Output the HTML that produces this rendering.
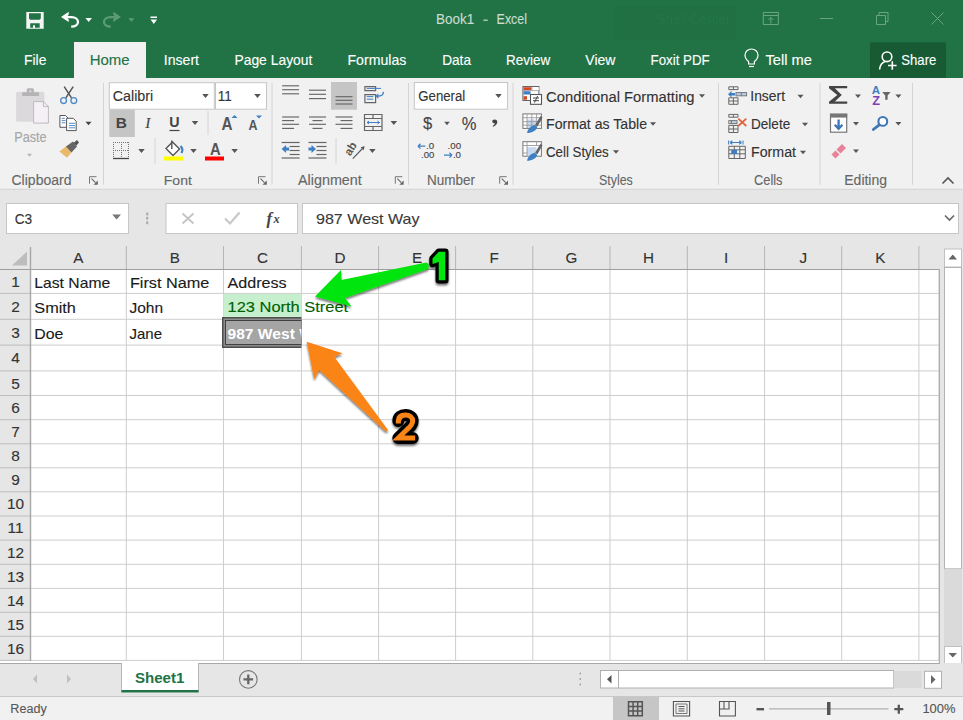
<!DOCTYPE html>
<html><head><meta charset="utf-8"><style>
html,body{margin:0;padding:0;width:963px;height:720px;overflow:hidden;background:#fff;}
svg{display:block;position:absolute;left:0;top:0;}
</style></head><body>
<svg width="963" height="720" viewBox="0 0 963 720" shape-rendering="auto">
<rect x="0" y="0" width="963" height="78" fill="#217346"/>
<rect x="0" y="78" width="963" height="112" fill="#f1f1f1"/>
<line x1="0" y1="189.5" x2="963" y2="189.5" stroke="#d8d8d8" stroke-width="1.6"/>
<rect x="0" y="190" width="963" height="57" fill="#e6e6e6"/>
<path d="M26.3,12 H43.7 V28.8 H26.3 Z M29,13.2 H40.8 V18.6 L39.6,19.8 H30.2 L29,18.6 Z M30.2,23.2 H39.7 V27.8 H35 V25.3 H33 V27.8 H30.2 Z" fill="#f4f4f4" stroke="none" stroke-width="1" fill-rule="evenodd"/>
<path d="M65,17.2 H71.5 C75.5,17.2 78,19.5 78,22 C78,24.5 75.5,26.6 71.2,26.6" fill="none" stroke="#fff" stroke-width="2.3"/>
<path d="M61,16.9 L68.7,11.8 L68.7,14.8 L66.5,16.9 L68.7,19.2 L68.7,22 Z" fill="#fff" stroke="none" stroke-width="1"/>
<path d="M85.45,18.1 L91.95,18.1 L88.7,21.9 Z" fill="#fff" stroke="none" stroke-width="1"/>
<path d="M117,17.2 H110.5 C106.5,17.2 104,19.5 104,22 C104,24.5 106.5,26.6 110.8,26.6" fill="none" stroke="#5c9c74" stroke-width="2.3"/>
<path d="M121,16.9 L113.3,11.8 L113.3,14.8 L115.5,16.9 L113.3,19.2 L113.3,22 Z" fill="#5c9c74" stroke="none" stroke-width="1"/>
<path d="M128.4,18.25 L134.4,18.25 L131.4,21.75 Z" fill="#5c9c74" stroke="none" stroke-width="1"/>
<rect x="150.5" y="16.5" width="6.5" height="1.5" fill="#fff"/>
<path d="M150.55,19.45 L157.05,19.45 L153.8,23.95 Z" fill="#fff" stroke="none" stroke-width="1"/>
<text x="436.0" y="24.2" font-size="15.26" fill="#c9ddd0" font-weight="normal" font-family="Liberation Sans" text-anchor="start" textLength="38.2" lengthAdjust="spacingAndGlyphs" stroke="#c9ddd0" stroke-width="0.12">Book1</text>
<rect x="483.4" y="19.6" width="4.3" height="1.2" fill="#c9ddd0"/>
<text x="496.6" y="24.2" font-size="15.26" fill="#c9ddd0" font-weight="normal" font-family="Liberation Sans" text-anchor="start" textLength="30.4" lengthAdjust="spacingAndGlyphs" stroke="#c9ddd0" stroke-width="0.12">Excel</text>
<rect x="614.4" y="6.2" width="122" height="34.3" fill="#000" fill-opacity="0.02"/>
<text x="656.6" y="24" font-size="15" font-family="Liberation Sans" fill="#fff" fill-opacity="0.04" textLength="73.7" lengthAdjust="spacingAndGlyphs">Shell Center</text>
<path d="M763.3,12.5 H778.3 V24.5 H763.3 Z M763.3,15.5 H778.3" fill="none" stroke="#6aa582" stroke-width="1"/>
<path d="M770.8,23.5 V17.5 M768.3,20 L770.8,17.5 L773.3,20" fill="none" stroke="#6aa582" stroke-width="1"/>
<line x1="820" y1="18.5" x2="833" y2="18.5" stroke="#6aa582" stroke-width="1"/>
<path d="M876.5,15.5 H885.5 V24.5 H876.5 Z M879,15.5 V12.5 H888 V21.5 H885.5" fill="none" stroke="#6aa582" stroke-width="1"/>
<path d="M931.5,12.5 L943.5,24.5 M943.5,12.5 L931.5,24.5" fill="none" stroke="#6aa582" stroke-width="1"/>
<rect x="74" y="42" width="72" height="36" fill="#f1f1f1"/>
<text x="24.0" y="64.8" font-size="15.12" fill="#ffffff" font-weight="normal" font-family="Liberation Sans" text-anchor="start" textLength="22.4" lengthAdjust="spacingAndGlyphs" stroke="#ffffff" stroke-width="0.12">File</text>
<text x="163.8" y="64.8" font-size="15.12" fill="#ffffff" font-weight="normal" font-family="Liberation Sans" text-anchor="start" textLength="35.2" lengthAdjust="spacingAndGlyphs" stroke="#ffffff" stroke-width="0.12">Insert</text>
<text x="234.4" y="64.8" font-size="15.12" fill="#ffffff" font-weight="normal" font-family="Liberation Sans" text-anchor="start" textLength="78.0" lengthAdjust="spacingAndGlyphs" stroke="#ffffff" stroke-width="0.12">Page Layout</text>
<text x="347.5" y="64.8" font-size="15.12" fill="#ffffff" font-weight="normal" font-family="Liberation Sans" text-anchor="start" textLength="58.8" lengthAdjust="spacingAndGlyphs" stroke="#ffffff" stroke-width="0.12">Formulas</text>
<text x="442.2" y="64.8" font-size="15.12" fill="#ffffff" font-weight="normal" font-family="Liberation Sans" text-anchor="start" textLength="28.8" lengthAdjust="spacingAndGlyphs" stroke="#ffffff" stroke-width="0.12">Data</text>
<text x="506.0" y="64.8" font-size="15.12" fill="#ffffff" font-weight="normal" font-family="Liberation Sans" text-anchor="start" textLength="44.2" lengthAdjust="spacingAndGlyphs" stroke="#ffffff" stroke-width="0.12">Review</text>
<text x="585.3" y="64.8" font-size="15.12" fill="#ffffff" font-weight="normal" font-family="Liberation Sans" text-anchor="start" textLength="30.1" lengthAdjust="spacingAndGlyphs" stroke="#ffffff" stroke-width="0.12">View</text>
<text x="650.5" y="64.8" font-size="15.12" fill="#ffffff" font-weight="normal" font-family="Liberation Sans" text-anchor="start" textLength="59.2" lengthAdjust="spacingAndGlyphs" stroke="#ffffff" stroke-width="0.12">Foxit PDF</text>
<text x="765.5" y="64.8" font-size="15.12" fill="#ffffff" font-weight="normal" font-family="Liberation Sans" text-anchor="start" textLength="46.5" lengthAdjust="spacingAndGlyphs" stroke="#ffffff" stroke-width="0.12">Tell me</text>
<text x="89.7" y="64.8" font-size="15.12" fill="#217346" font-weight="normal" font-family="Liberation Sans" text-anchor="start" textLength="39.9" lengthAdjust="spacingAndGlyphs" stroke="#217346" stroke-width="0.12">Home</text>
<path d="M748.6,61.5 C746,59.5 745,57.5 745,55 C745,51.5 748,49 751.5,49 C755,49 758,51.5 758,55 C758,57.5 757,59.5 754.4,61.5 V64 H748.6 Z" fill="none" stroke="#fff" stroke-width="1.2"/>
<line x1="749" y1="66.5" x2="754" y2="66.5" stroke="#fff" stroke-width="1.2"/>
<rect x="870" y="42.3" width="76" height="35.5" fill="#185a33"/>
<circle cx="887" cy="56.8" r="4.8" fill="none" stroke="#fff" stroke-width="1.6"/>
<path d="M879.6,69.5 C880,65.5 882.3,62.5 885.2,61.6" fill="none" stroke="#fff" stroke-width="1.6"/>
<path d="M892.3,61.2 V69.8 M888,65.5 H896.6" fill="none" stroke="#fff" stroke-width="1.6"/>
<text x="901.3" y="64.8" font-size="15.12" fill="#ffffff" font-weight="normal" font-family="Liberation Sans" text-anchor="start" textLength="35.0" lengthAdjust="spacingAndGlyphs" stroke="#ffffff" stroke-width="0.12">Share</text>
<path d="M89.5,183.7 V176.7 H96.5" fill="none" stroke="#777" stroke-width="1"/>
<path d="M91.5,178.7 L95.5,182.7" fill="none" stroke="#666" stroke-width="1.1"/>
<path d="M97.8,184.7 V180.39999999999998 L93.5,184.7 Z" fill="#666" stroke="none" stroke-width="1"/>
<path d="M258.5,183.7 V176.7 H265.5" fill="none" stroke="#777" stroke-width="1"/>
<path d="M260.5,178.7 L264.5,182.7" fill="none" stroke="#666" stroke-width="1.1"/>
<path d="M266.8,184.7 V180.39999999999998 L262.5,184.7 Z" fill="#666" stroke="none" stroke-width="1"/>
<path d="M395.3,183.7 V176.7 H402.3" fill="none" stroke="#777" stroke-width="1"/>
<path d="M397.3,178.7 L401.3,182.7" fill="none" stroke="#666" stroke-width="1.1"/>
<path d="M403.6,184.7 V180.39999999999998 L399.3,184.7 Z" fill="#666" stroke="none" stroke-width="1"/>
<path d="M499.7,183.7 V176.7 H506.7" fill="none" stroke="#777" stroke-width="1"/>
<path d="M501.7,178.7 L505.7,182.7" fill="none" stroke="#666" stroke-width="1.1"/>
<path d="M508.0,184.7 V180.39999999999998 L503.7,184.7 Z" fill="#666" stroke="none" stroke-width="1"/>
<line x1="103.5" y1="83" x2="103.5" y2="184.7" stroke="#d4d4d4" stroke-width="1"/>
<line x1="272" y1="83" x2="272" y2="184.7" stroke="#d4d4d4" stroke-width="1"/>
<line x1="408.5" y1="83" x2="408.5" y2="184.7" stroke="#d4d4d4" stroke-width="1"/>
<line x1="513" y1="83" x2="513" y2="184.7" stroke="#d4d4d4" stroke-width="1"/>
<line x1="718.5" y1="83" x2="718.5" y2="184.7" stroke="#d4d4d4" stroke-width="1"/>
<line x1="820" y1="83" x2="820" y2="184.7" stroke="#d4d4d4" stroke-width="1"/>
<line x1="912.5" y1="83" x2="912.5" y2="184.7" stroke="#d4d4d4" stroke-width="1"/>
<rect x="16.1" y="91.7" width="28.3" height="30" rx="1.5" fill="#dcd9dc"/>
<rect x="22" y="92.2" width="17.1" height="3.9" rx="1" fill="#b5b3b5"/>
<rect x="26.7" y="88.3" width="7.2" height="4.5" rx="1.5" fill="#b5b3b5"/>
<circle cx="30.3" cy="91.3" r="1" fill="#e8e6e8"/>
<path d="M33.6,101.6 H43.4 L48.4,106.6 V123.1 H33.6 Z" fill="#f4f0f6" stroke="#bdb9bd" stroke-width="1"/>
<path d="M43.4,101.6 V106.6 H48.4" fill="none" stroke="#bdb9bd" stroke-width="1"/>
<text x="14.2" y="141.7" font-size="14.53" fill="#a5a5a5" font-weight="normal" font-family="Liberation Sans" text-anchor="start" textLength="32.5" lengthAdjust="spacingAndGlyphs" stroke="#a5a5a5" stroke-width="0.12">Paste</text>
<path d="M27.0,153.7 L32.0,153.7 L29.5,156.7 Z" fill="#b5b5b5" stroke="none" stroke-width="1"/>
<path d="M64.2,86.7 L71.5,97.8 M73.2,86.7 L65.9,97.8" fill="none" stroke="#555" stroke-width="1.5"/>
<circle cx="63.6" cy="100.6" r="2.9" fill="none" stroke="#4b86c6" stroke-width="1.3"/>
<circle cx="73.8" cy="100.6" r="2.9" fill="none" stroke="#4b86c6" stroke-width="1.3"/>
<path d="M59.9,115.5 H65.5 L67.8,117.8 V127.3 H59.9 Z" fill="#fff" stroke="#555" stroke-width="1"/>
<path d="M66.6,118.3 H73.2 L76.2,121.3 V130.6 H66.6 Z" fill="#fff" stroke="#555" stroke-width="1"/>
<path d="M61.7,118.3 H64.8 M61.7,120.6 H65.5 M61.7,122.8 H65.5 M68.9,123.3 H75 M68.9,125.6 H75 M68.9,127.8 H75" fill="none" stroke="#3f7fc3" stroke-width="0.9"/>
<path d="M85.5,121.75 L91.5,121.75 L88.5,125.25 Z" fill="#444" stroke="none" stroke-width="1"/>
<path d="M59.4,151.5 L66.5,146 L71.5,152.5 L67,157.8 Z" fill="#e8b96a" stroke="none" stroke-width="1"/>
<path d="M66,146.5 L73,141.5 L77,146.5 L71.5,152.5 Z" fill="#666" stroke="none" stroke-width="1"/>
<path d="M73.5,143 L77,140 L79,142.5 L76.5,145.5 Z" fill="#555" stroke="none" stroke-width="1"/>
<text x="11.5" y="184.6" font-size="13.81" fill="#666666" font-weight="normal" font-family="Liberation Sans" text-anchor="start" textLength="60.0" lengthAdjust="spacingAndGlyphs" stroke="#666666" stroke-width="0.12">Clipboard</text>
<rect x="109.3" y="82.7" width="105" height="26.5" fill="#ffffff" stroke="#c6c6c6" stroke-width="1"/>
<rect x="215.5" y="82.7" width="51" height="26.5" fill="#ffffff" stroke="#c6c6c6" stroke-width="1"/>
<text x="112.7" y="100.8" font-size="14.68" fill="#333333" font-weight="normal" font-family="Liberation Sans" text-anchor="start" textLength="40.6" lengthAdjust="spacingAndGlyphs" stroke="#333333" stroke-width="0.12">Calibri</text>
<path d="M202.25,94.1 L208.75,94.1 L205.5,97.9 Z" fill="#555" stroke="none" stroke-width="1"/>
<text x="217.8" y="100.8" font-size="14.68" fill="#333333" font-weight="normal" font-family="Liberation Sans" text-anchor="start" textLength="14.0" lengthAdjust="spacingAndGlyphs" stroke="#333333" stroke-width="0.12">11</text>
<path d="M254.25,94.1 L260.75,94.1 L257.5,97.9 Z" fill="#555" stroke="none" stroke-width="1"/>
<rect x="109.3" y="109.5" width="25.5" height="27.5" fill="#c5c5c5"/>
<text x="121.2" y="128.4" font-size="15.41" fill="#444" font-weight="bold" font-family="Liberation Sans" text-anchor="middle">B</text>
<text x="147.7" y="128.4" font-size="15.41" fill="#444" font-weight="normal" font-family="Liberation Serif" text-anchor="middle" stroke="#444" stroke-width="0.12" font-style="italic">I</text>
<text x="174.4" y="127.4" font-size="14.24" fill="#444" font-weight="bold" font-family="Liberation Sans" text-anchor="middle">U</text>
<line x1="169.5" y1="130.5" x2="179.5" y2="130.5" stroke="#444" stroke-width="1.2"/>
<path d="M191.75,121.1 L198.25,121.1 L195,124.9 Z" fill="#555" stroke="none" stroke-width="1"/>
<line x1="208" y1="111" x2="208" y2="135" stroke="#d4d4d4" stroke-width="1"/>
<text x="221.5" y="130.3" font-size="17.44" fill="#555" font-weight="bold" font-family="Liberation Sans" text-anchor="start" textLength="11.0" lengthAdjust="spacingAndGlyphs">A</text>
<path d="M231.5,118 L234.5,115 L237.5,118 Z" fill="#3f7fc3" stroke="none" stroke-width="1"/>
<text x="248.6" y="130.3" font-size="13.81" fill="#555" font-weight="bold" font-family="Liberation Sans" text-anchor="start" textLength="9.0" lengthAdjust="spacingAndGlyphs">A</text>
<path d="M256,115.5 L262,115.5 L259,118.5 Z" fill="#3f7fc3" stroke="none" stroke-width="1"/>
<rect x="113" y="142" width="1" height="1" fill="#777"/>
<rect x="113" y="150" width="1" height="1" fill="#777"/>
<rect x="113" y="142" width="1" height="1" fill="#777"/>
<rect x="121" y="142" width="1" height="1" fill="#777"/>
<rect x="128" y="142" width="1" height="1" fill="#777"/>
<rect x="115" y="142" width="1" height="1" fill="#777"/>
<rect x="115" y="150" width="1" height="1" fill="#777"/>
<rect x="113" y="144" width="1" height="1" fill="#777"/>
<rect x="121" y="144" width="1" height="1" fill="#777"/>
<rect x="128" y="144" width="1" height="1" fill="#777"/>
<rect x="117" y="142" width="1" height="1" fill="#777"/>
<rect x="117" y="150" width="1" height="1" fill="#777"/>
<rect x="113" y="146" width="1" height="1" fill="#777"/>
<rect x="121" y="146" width="1" height="1" fill="#777"/>
<rect x="128" y="146" width="1" height="1" fill="#777"/>
<rect x="119" y="142" width="1" height="1" fill="#777"/>
<rect x="119" y="150" width="1" height="1" fill="#777"/>
<rect x="113" y="148" width="1" height="1" fill="#777"/>
<rect x="121" y="148" width="1" height="1" fill="#777"/>
<rect x="128" y="148" width="1" height="1" fill="#777"/>
<rect x="121" y="142" width="1" height="1" fill="#777"/>
<rect x="121" y="150" width="1" height="1" fill="#777"/>
<rect x="113" y="150" width="1" height="1" fill="#777"/>
<rect x="121" y="150" width="1" height="1" fill="#777"/>
<rect x="128" y="150" width="1" height="1" fill="#777"/>
<rect x="123" y="142" width="1" height="1" fill="#777"/>
<rect x="123" y="150" width="1" height="1" fill="#777"/>
<rect x="113" y="152" width="1" height="1" fill="#777"/>
<rect x="121" y="152" width="1" height="1" fill="#777"/>
<rect x="128" y="152" width="1" height="1" fill="#777"/>
<rect x="125" y="142" width="1" height="1" fill="#777"/>
<rect x="125" y="150" width="1" height="1" fill="#777"/>
<rect x="113" y="154" width="1" height="1" fill="#777"/>
<rect x="121" y="154" width="1" height="1" fill="#777"/>
<rect x="128" y="154" width="1" height="1" fill="#777"/>
<rect x="127" y="142" width="1" height="1" fill="#777"/>
<rect x="127" y="150" width="1" height="1" fill="#777"/>
<rect x="113" y="156" width="1" height="1" fill="#777"/>
<rect x="121" y="156" width="1" height="1" fill="#777"/>
<rect x="128" y="156" width="1" height="1" fill="#777"/>
<line x1="113" y1="158.5" x2="129" y2="158.5" stroke="#444" stroke-width="1.3"/>
<path d="M138.25,149.1 L144.75,149.1 L141.5,152.9 Z" fill="#555" stroke="none" stroke-width="1"/>
<line x1="155" y1="138" x2="155" y2="164" stroke="#d4d4d4" stroke-width="1"/>
<path d="M166,148.5 L172.5,142 L179.5,149 L173,155.5 Z" fill="#fff" stroke="#555" stroke-width="1.4"/>
<path d="M171.8,140.5 V149" fill="none" stroke="#555" stroke-width="1.4"/>
<path d="M180.5,146 C182.5,148 183,150.5 181.5,153" fill="none" stroke="#3f7fc3" stroke-width="2.2"/>
<rect x="164" y="156.5" width="19" height="4" fill="#ffff00"/>
<path d="M190.25,149.1 L196.75,149.1 L193.5,152.9 Z" fill="#555" stroke="none" stroke-width="1"/>
<text x="209.9" y="155.1" font-size="16.13" fill="#555" font-weight="bold" font-family="Liberation Sans" text-anchor="start" textLength="10.7" lengthAdjust="spacingAndGlyphs">A</text>
<rect x="205" y="156.5" width="19" height="4" fill="#ff0000"/>
<path d="M231.35,149.1 L237.85,149.1 L234.6,152.9 Z" fill="#555" stroke="none" stroke-width="1"/>
<text x="163.8" y="184.5" font-size="13.52" fill="#666666" font-weight="normal" font-family="Liberation Sans" text-anchor="start" textLength="28.0" lengthAdjust="spacingAndGlyphs" stroke="#666666" stroke-width="0.12">Font</text>
<rect x="331" y="82" width="26" height="27.7" fill="#c5c5c5"/>
<line x1="282.1" y1="85.8" x2="299.1" y2="85.8" stroke="#666666" stroke-width="1.15"/>
<line x1="282.1" y1="89.7" x2="299.1" y2="89.7" stroke="#666666" stroke-width="1.15"/>
<line x1="282.1" y1="93.8" x2="299.1" y2="93.8" stroke="#666666" stroke-width="1.15"/>
<line x1="309.0" y1="90.2" x2="326.0" y2="90.2" stroke="#666666" stroke-width="1.15"/>
<line x1="309.0" y1="94.3" x2="326.0" y2="94.3" stroke="#666666" stroke-width="1.15"/>
<line x1="309.0" y1="98.6" x2="326.0" y2="98.6" stroke="#666666" stroke-width="1.15"/>
<line x1="335.5" y1="96.7" x2="352.5" y2="96.7" stroke="#666666" stroke-width="1.15"/>
<line x1="335.5" y1="100.3" x2="352.5" y2="100.3" stroke="#666666" stroke-width="1.15"/>
<line x1="335.5" y1="104" x2="352.5" y2="104" stroke="#666666" stroke-width="1.15"/>
<path d="M364.9,86.7 H375.6 V90.6 H364.9 Z M364.9,94.7 H375.6 V102.6 H364.9 Z" fill="none" stroke="#666666" stroke-width="1.2"/>
<path d="M366.7,88.4 H381.1 M366.7,96.6 H373.3 M366.7,99.2 H373.3" fill="none" stroke="#3f7fc3" stroke-width="1"/>
<path d="M383.3,91.8 C383.8,95 381,96.3 377,96.1" fill="none" stroke="#3f7fc3" stroke-width="1.4"/>
<path d="M375.2,96.1 L378.4,93.4 L378.4,98.8 Z" fill="#3f7fc3" stroke="none" stroke-width="1"/>
<line x1="282.1" y1="117" x2="299.1" y2="117" stroke="#666666" stroke-width="1.15"/>
<line x1="282.1" y1="120.6" x2="294.1" y2="120.6" stroke="#666666" stroke-width="1.15"/>
<line x1="282.1" y1="124.3" x2="299.1" y2="124.3" stroke="#666666" stroke-width="1.15"/>
<line x1="282.1" y1="128.4" x2="294.1" y2="128.4" stroke="#666666" stroke-width="1.15"/>
<line x1="309.0" y1="117" x2="326.0" y2="117" stroke="#666666" stroke-width="1.15"/>
<line x1="312.5" y1="120.6" x2="322.5" y2="120.6" stroke="#666666" stroke-width="1.15"/>
<line x1="309.0" y1="124.3" x2="326.0" y2="124.3" stroke="#666666" stroke-width="1.15"/>
<line x1="312.5" y1="128.4" x2="322.5" y2="128.4" stroke="#666666" stroke-width="1.15"/>
<line x1="335.5" y1="117" x2="352.5" y2="117" stroke="#666666" stroke-width="1.15"/>
<line x1="340.5" y1="120.6" x2="352.5" y2="120.6" stroke="#666666" stroke-width="1.15"/>
<line x1="335.5" y1="124.3" x2="352.5" y2="124.3" stroke="#666666" stroke-width="1.15"/>
<line x1="340.5" y1="128.4" x2="352.5" y2="128.4" stroke="#666666" stroke-width="1.15"/>
<path d="M364.5,114.5 H382 V130.5 H364.5 Z M364.5,118.5 H382 M364.5,126.5 H382 M373,114.5 V118.5 M373,126.5 V130.5" fill="none" stroke="#666666" stroke-width="1.2"/>
<path d="M367,122.5 H379.5 M367,122.5 L369,121 M367,122.5 L369,124 M379.5,122.5 L377.5,121 M379.5,122.5 L377.5,124" fill="none" stroke="#3f7fc3" stroke-width="1"/>
<path d="M390.55,121.1 L397.05,121.1 L393.8,124.9 Z" fill="#555" stroke="none" stroke-width="1"/>
<line x1="281.6" y1="142.5" x2="299.6" y2="142.5" stroke="#666666" stroke-width="1.2"/>
<line x1="289.6" y1="146.5" x2="299.6" y2="146.5" stroke="#666666" stroke-width="1.2"/>
<line x1="289.6" y1="150.5" x2="299.6" y2="150.5" stroke="#666666" stroke-width="1.2"/>
<line x1="289.6" y1="154.5" x2="299.6" y2="154.5" stroke="#666666" stroke-width="1.2"/>
<line x1="281.6" y1="158" x2="299.6" y2="158" stroke="#666666" stroke-width="1.2"/>
<path d="M281.6,149 L286.1,145 V147.5 H289.1 V150.5 H286.1 V153 Z" fill="#3f7fc3" stroke="none" stroke-width="1"/>
<line x1="308.5" y1="142.5" x2="326.5" y2="142.5" stroke="#666666" stroke-width="1.2"/>
<line x1="316.5" y1="146.5" x2="326.5" y2="146.5" stroke="#666666" stroke-width="1.2"/>
<line x1="316.5" y1="150.5" x2="326.5" y2="150.5" stroke="#666666" stroke-width="1.2"/>
<line x1="316.5" y1="154.5" x2="326.5" y2="154.5" stroke="#666666" stroke-width="1.2"/>
<line x1="308.5" y1="158" x2="326.5" y2="158" stroke="#666666" stroke-width="1.2"/>
<path d="M316.0,149 L311.5,145 V147.5 H308.5 V150.5 H311.5 V153 Z" fill="#3f7fc3" stroke="none" stroke-width="1"/>
<line x1="336" y1="138" x2="336" y2="164" stroke="#d4d4d4" stroke-width="1"/>
<text x="0" y="0" font-size="11.5" fill="#5a5a5a" font-weight="bold" font-family="Liberation Sans" transform="translate(350.2 156.5) rotate(-58)">ab</text>
<path d="M352.8,158.7 L363.9,147" fill="none" stroke="#555" stroke-width="1.1"/>
<path d="M364.6,146.3 L360.6,147.3 L363.6,150.2 Z" fill="#555" stroke="none" stroke-width="1"/>
<path d="M369.15,149.1 L375.65,149.1 L372.4,152.9 Z" fill="#555" stroke="none" stroke-width="1"/>
<text x="298.0" y="184.6" font-size="13.81" fill="#666666" font-weight="normal" font-family="Liberation Sans" text-anchor="start" textLength="63.8" lengthAdjust="spacingAndGlyphs" stroke="#666666" stroke-width="0.12">Alignment</text>
<rect x="414.3" y="82.5" width="93.3" height="26.7" fill="#ffffff" stroke="#c6c6c6" stroke-width="1"/>
<text x="418.3" y="100.7" font-size="14.53" fill="#333333" font-weight="normal" font-family="Liberation Sans" text-anchor="start" textLength="47.0" lengthAdjust="spacingAndGlyphs" stroke="#333333" stroke-width="0.12">General</text>
<path d="M495.25,94.1 L501.75,94.1 L498.5,97.9 Z" fill="#555" stroke="none" stroke-width="1"/>
<text x="427.7" y="128.5" font-size="16.28" fill="#444" font-weight="normal" font-family="Liberation Sans" text-anchor="middle" textLength="9.2" lengthAdjust="spacingAndGlyphs" stroke="#444" stroke-width="0.12">$</text>
<path d="M444.25,121.85 L449.75,121.85 L447,125.15 Z" fill="#555" stroke="none" stroke-width="1"/>
<text x="469.2" y="129.8" font-size="18.17" fill="#444" font-weight="normal" font-family="Liberation Sans" text-anchor="middle" textLength="14.7" lengthAdjust="spacingAndGlyphs" stroke="#444" stroke-width="0.12">%</text>
<path d="M494.5,119.5 C496.5,119.5 497.3,120.8 497.3,122 C497.3,124 495.5,126 493,126.8 L492.7,125.8 C494,125.2 494.8,124.3 494.8,123.3 C493.2,123.3 492.3,122.4 492.3,121.4 C492.3,120.2 493.3,119.5 494.5,119.5 Z" fill="#444" stroke="none" stroke-width="1"/>
<text x="426.1" y="148.8" font-size="8.72" fill="#444" font-weight="normal" font-family="Liberation Sans" text-anchor="start" textLength="8.1" lengthAdjust="spacingAndGlyphs" stroke="#444" stroke-width="0.12">.0</text>
<text x="421.0" y="157.6" font-size="8.72" fill="#444" font-weight="normal" font-family="Liberation Sans" text-anchor="start" textLength="13.2" lengthAdjust="spacingAndGlyphs" stroke="#444" stroke-width="0.12">.00</text>
<path d="M418,146.2 H425.3 M418,146.2 L420.5,143.8 M418,146.2 L420.5,148.6" fill="none" stroke="#3f7fc3" stroke-width="1.2"/>
<text x="447.6" y="148.8" font-size="8.72" fill="#444" font-weight="normal" font-family="Liberation Sans" text-anchor="start" textLength="13.4" lengthAdjust="spacingAndGlyphs" stroke="#444" stroke-width="0.12">.00</text>
<text x="452.9" y="157.6" font-size="8.72" fill="#444" font-weight="normal" font-family="Liberation Sans" text-anchor="start" textLength="8.1" lengthAdjust="spacingAndGlyphs" stroke="#444" stroke-width="0.12">.0</text>
<path d="M444,155.1 H452 M452,155.1 L449.5,152.7 M452,155.1 L449.5,157.5" fill="none" stroke="#3f7fc3" stroke-width="1.2"/>
<text x="427.0" y="184.6" font-size="13.81" fill="#666666" font-weight="normal" font-family="Liberation Sans" text-anchor="start" textLength="48.0" lengthAdjust="spacingAndGlyphs" stroke="#666666" stroke-width="0.12">Number</text>
<rect x="522.9" y="86.5" width="16" height="14" fill="#ffffff" stroke="#666" stroke-width="1"/>
<rect x="523.5" y="87.2" width="8" height="3" fill="#d24726"/>
<rect x="532.2" y="87.2" width="6.5" height="3" fill="#ffffff"/>
<path d="M532,87 V90.5 M523,90.6 H539" fill="none" stroke="#999" stroke-width="0.8"/>
<rect x="523.5" y="91.2" width="7" height="3.3" fill="#3f7fc3"/>
<rect x="523.5" y="96.2" width="3.5" height="3.5" fill="#d24726"/>
<rect x="530.5" y="94.5" width="11" height="9.8" fill="#ffffff" stroke="#555" stroke-width="1.1"/>
<path d="M533,98 H539 M533,100.7 H539 M537.6,96 L534.4,102.7" fill="none" stroke="#444" stroke-width="1"/>
<text x="546.1" y="101.7" font-size="14.53" fill="#333333" font-weight="normal" font-family="Liberation Sans" text-anchor="start" textLength="148.5" lengthAdjust="spacingAndGlyphs" stroke="#333333" stroke-width="0.12">Conditional Formatting</text>
<path d="M699.0,94.25 L705.0,94.25 L702,97.75 Z" fill="#555" stroke="none" stroke-width="1"/>
<rect x="522.9" y="113.9" width="18.5" height="14.5" fill="#ffffff" stroke="#777" stroke-width="1"/>
<rect x="527" y="119.4" width="9" height="8.5" fill="#c5d9f1"/>
<path d="M522.9,117.7 H541.4 M522.9,121.7 H541.4 M522.9,125.2 H541.4 M527,113.9 V128.4 M531.8,113.9 V128.4 M536.6,113.9 V128.4" fill="none" stroke="#999" stroke-width="0.9"/>
<path d="M535,124.9 L540.5,115.9 L542.5,117.4 L537.5,126.4 Z" fill="#666" stroke="none" stroke-width="1"/>
<path d="M527,132.9 C527.5,129.4 530.5,125.9 534.5,124.9 L537.2,126.9 C536.5,130.4 532,132.9 527,132.9 Z" fill="#3f7fc3" stroke="none" stroke-width="1"/>
<text x="546.0" y="129.0" font-size="14.53" fill="#333333" font-weight="normal" font-family="Liberation Sans" text-anchor="start" textLength="101.0" lengthAdjust="spacingAndGlyphs" stroke="#333333" stroke-width="0.12">Format as Table</text>
<path d="M650.0,122.25 L656.0,122.25 L653,125.75 Z" fill="#555" stroke="none" stroke-width="1"/>
<rect x="522.9" y="141.7" width="18.5" height="14.5" fill="#ffffff" stroke="#777" stroke-width="1"/>
<rect x="527" y="147.2" width="9.5" height="9" fill="#c5d9f1"/>
<path d="M522.9,145.5 H541.4 M522.9,153.0 H527 M527,141.7 V156.2 M536.6,141.7 V145.5" fill="none" stroke="#999" stroke-width="0.9"/>
<path d="M535,152.7 L540.5,143.7 L542.5,145.2 L537.5,154.2 Z" fill="#666" stroke="none" stroke-width="1"/>
<path d="M527,160.7 C527.5,157.2 530.5,153.7 534.5,152.7 L537.2,154.7 C536.5,158.2 532,160.7 527,160.7 Z" fill="#3f7fc3" stroke="none" stroke-width="1"/>
<text x="546.0" y="157.0" font-size="14.53" fill="#333333" font-weight="normal" font-family="Liberation Sans" text-anchor="start" textLength="62.7" lengthAdjust="spacingAndGlyphs" stroke="#333333" stroke-width="0.12">Cell Styles</text>
<path d="M613.0,150.25 L619.0,150.25 L616,153.75 Z" fill="#555" stroke="none" stroke-width="1"/>
<text x="599.0" y="184.6" font-size="13.81" fill="#666666" font-weight="normal" font-family="Liberation Sans" text-anchor="start" textLength="33.7" lengthAdjust="spacingAndGlyphs" stroke="#666666" stroke-width="0.12">Styles</text>
<path d="M728.8,86.8 H738 V89.6 H728.8 Z M733.4,86.8 V89.6" fill="none" stroke="#666" stroke-width="1"/>
<path d="M728.8,97.8 H738 V104.3 H728.8 Z M728.8,101 H738 M733.4,97.8 V104.3" fill="none" stroke="#666" stroke-width="1"/>
<rect x="736" y="92.6" width="10.6" height="3.2" fill="#b8d0ea" stroke="#777" stroke-width="1"/>
<line x1="741.3" y1="92.6" x2="741.3" y2="95.8" stroke="#777" stroke-width="1"/>
<path d="M728,94.2 L731.5,90.8 V92.9 H735 V95.5 H731.5 V97.6 Z" fill="#3f7fc3" stroke="none" stroke-width="1"/>
<text x="750.3" y="100.5" font-size="14.24" fill="#333333" font-weight="normal" font-family="Liberation Sans" text-anchor="start" textLength="34.7" lengthAdjust="spacingAndGlyphs" stroke="#333333" stroke-width="0.12">Insert</text>
<path d="M797.5,94.75 L803.5,94.75 L800.5,98.25 Z" fill="#555" stroke="none" stroke-width="1"/>
<path d="M728.8,114.4 H738 V117.2 H728.8 Z M733.4,114.4 V117.2" fill="none" stroke="#666" stroke-width="1"/>
<path d="M728.8,125.4 H738 V132.5 H728.8 Z M728.8,129 H738 M733.4,125.4 V132.5" fill="none" stroke="#666" stroke-width="1"/>
<rect x="728.8" y="120.6" width="2.4" height="3" fill="none" stroke="#777" stroke-width="1"/>
<rect x="731.4" y="120.6" width="5.6" height="3" fill="#b8d0ea" stroke="#777" stroke-width="1"/>
<path d="M738.3,118.6 L746.3,126 M746.3,118.6 L738.3,126" fill="none" stroke="#e0643f" stroke-width="1.8"/>
<text x="751.0" y="128.7" font-size="14.24" fill="#333333" font-weight="normal" font-family="Liberation Sans" text-anchor="start" textLength="39.2" lengthAdjust="spacingAndGlyphs" stroke="#333333" stroke-width="0.12">Delete</text>
<path d="M802.0,122.75 L808.0,122.75 L805,126.25 Z" fill="#555" stroke="none" stroke-width="1"/>
<path d="M728.8,146.3 H745.3 V158.5 H728.8 Z M728.8,149.8 H745.3 M728.8,153.8 H745.3 M734.3,146.3 V158.5 M739.8,146.3 V158.5" fill="none" stroke="#666" stroke-width="1"/>
<rect x="731.2" y="150" width="5.8" height="4" fill="#3f7fc3"/>
<path d="M730,142.5 H741.5 M730,142.5 L732.3,140.8 M730,142.5 L732.3,144.2 M741.5,142.5 L739.2,140.8 M741.5,142.5 L739.2,144.2" fill="none" stroke="#3f7fc3" stroke-width="1.1"/>
<path d="M728.6,140.5 V144.5 M743,140.5 V144.5" fill="none" stroke="#3f7fc3" stroke-width="1"/>
<text x="751.0" y="156.5" font-size="14.24" fill="#333333" font-weight="normal" font-family="Liberation Sans" text-anchor="start" textLength="45.0" lengthAdjust="spacingAndGlyphs" stroke="#333333" stroke-width="0.12">Format</text>
<path d="M800.0,150.75 L806.0,150.75 L803,154.25 Z" fill="#555" stroke="none" stroke-width="1"/>
<text x="754.0" y="184.6" font-size="13.81" fill="#666666" font-weight="normal" font-family="Liberation Sans" text-anchor="start" textLength="28.5" lengthAdjust="spacingAndGlyphs" stroke="#666666" stroke-width="0.12">Cells</text>
<path d="M829,86 H847.2 V88.3 H834.8 L841.8,95 L834.8,101.4 H847.2 V103.7 H829 V101.7 L837.3,95 L829,88.2 Z" fill="#444" stroke="none" stroke-width="1"/>
<path d="M855.0,94.55 L861.0,94.55 L858,98.05 Z" fill="#555" stroke="none" stroke-width="1"/>
<text x="871.7" y="93.7" font-size="11.34" fill="#3f7fc3" font-weight="bold" font-family="Liberation Sans" text-anchor="start" textLength="8.3" lengthAdjust="spacingAndGlyphs">A</text>
<text x="872.2" y="104.8" font-size="12.21" fill="#7e3fb3" font-weight="bold" font-family="Liberation Sans" text-anchor="start" textLength="7.8" lengthAdjust="spacingAndGlyphs">Z</text>
<path d="M882.2,92 H890.6 L887.6,95.6 V99.8 H885.2 V95.6 Z" fill="#666" stroke="none" stroke-width="1"/>
<path d="M895.4,94.55 L901.4,94.55 L898.4,98.05 Z" fill="#555" stroke="none" stroke-width="1"/>
<rect x="830.5" y="114.2" width="16.2" height="18" fill="#ffffff" stroke="#777" stroke-width="1.2"/>
<rect x="830" y="113.7" width="17.2" height="3.9" fill="#777"/>
<path d="M838.6,119.5 V128.5 M834.8,124.8 L838.6,128.8 L842.4,124.8" fill="none" stroke="#3d75b5" stroke-width="2.3"/>
<path d="M853.0,121.95 L859.0,121.95 L856,125.45 Z" fill="#555" stroke="none" stroke-width="1"/>
<circle cx="882.8" cy="121.4" r="4.4" fill="#fff" stroke="#3d75b5" stroke-width="2.1"/>
<path d="M879.3,124.9 L873.3,129.5" fill="none" stroke="#3d75b5" stroke-width="2.8" stroke-linecap="round"/>
<path d="M895.4,121.95 L901.4,121.95 L898.4,125.45 Z" fill="#555" stroke="none" stroke-width="1"/>
<path d="M836.5,149.5 L842,144 L846,148 L840.5,153.5 Z" fill="#e8819a" stroke="none" stroke-width="1"/>
<path d="M831.5,154.5 L835.5,150.5 L839.5,154.5 L835.5,158.5 Z" fill="#e8819a" stroke="none" stroke-width="1"/>
<path d="M853.0,149.55 L859.0,149.55 L856,153.05 Z" fill="#555" stroke="none" stroke-width="1"/>
<text x="844.3" y="184.6" font-size="13.81" fill="#666666" font-weight="normal" font-family="Liberation Sans" text-anchor="start" textLength="42.7" lengthAdjust="spacingAndGlyphs" stroke="#666666" stroke-width="0.12">Editing</text>
<path d="M942.5,183.5 L948,178 L953.5,183.5" fill="none" stroke="#555" stroke-width="1.6"/>
<rect x="6.5" y="203.5" width="122" height="30" fill="#ffffff" stroke="#c6c6c6" stroke-width="1"/>
<text x="14.7" y="224.4" font-size="15.12" fill="#333333" font-weight="normal" font-family="Liberation Sans" text-anchor="start" textLength="17.5" lengthAdjust="spacingAndGlyphs" stroke="#333333" stroke-width="0.12">C3</text>
<path d="M112.19999999999999,214.6 L121.0,214.6 L116.6,219.6 Z" fill="#777" stroke="none" stroke-width="1"/>
<rect x="146.2" y="212.6" width="2" height="2.8" fill="#a8a8a8"/>
<rect x="146.2" y="216.79999999999998" width="2" height="2.8" fill="#a8a8a8"/>
<rect x="146.2" y="221.4" width="2" height="2.8" fill="#a8a8a8"/>
<rect x="166" y="203.5" width="131.5" height="30" fill="#ffffff" stroke="#c6c6c6" stroke-width="1"/>
<path d="M182.5,213.5 L193.5,223.5 M193.5,213.5 L182.5,223.5" fill="none" stroke="#c4c4c4" stroke-width="1.8"/>
<path d="M225,218.5 L230,223.5 L239.5,212.5" fill="none" stroke="#c8c8c8" stroke-width="2.2"/>
<text x="266.5" y="223.5" font-size="16.72" fill="#444" font-weight="bold" font-family="Liberation Serif" text-anchor="start" font-style="italic">f</text>
<text x="273.5" y="222.6" font-size="12.35" fill="#444" font-weight="bold" font-family="Liberation Serif" text-anchor="start" font-style="italic">x</text>
<rect x="302.5" y="203.5" width="656" height="30" fill="#ffffff" stroke="#c6c6c6" stroke-width="1"/>
<text x="316.0" y="224.1" font-size="15.12" fill="#3a3a3a" font-weight="normal" font-family="Liberation Sans" text-anchor="start" textLength="103.6" lengthAdjust="spacingAndGlyphs" stroke="#3a3a3a" stroke-width="0.12">987 West Way</text>
<path d="M945,215.5 L949.5,220 L954,215.5" fill="none" stroke="#666" stroke-width="1.6"/>
<rect x="0" y="247" width="939" height="22" fill="#e6e6e6"/>
<rect x="0" y="269" width="30.5" height="392" fill="#e6e6e6"/>
<rect x="30.5" y="269" width="908.5" height="391.5" fill="#ffffff"/>
<rect x="939" y="247" width="24" height="416" fill="#e6e6e6"/>
<line x1="126.3" y1="269" x2="126.3" y2="660.5" stroke="#cdcdcd" stroke-width="1"/>
<line x1="223.5" y1="269" x2="223.5" y2="660.5" stroke="#cdcdcd" stroke-width="1"/>
<line x1="301.4" y1="269" x2="301.4" y2="660.5" stroke="#cdcdcd" stroke-width="1"/>
<line x1="378.6" y1="269" x2="378.6" y2="660.5" stroke="#cdcdcd" stroke-width="1"/>
<line x1="455.6" y1="269" x2="455.6" y2="660.5" stroke="#cdcdcd" stroke-width="1"/>
<line x1="532.8" y1="269" x2="532.8" y2="660.5" stroke="#cdcdcd" stroke-width="1"/>
<line x1="610" y1="269" x2="610" y2="660.5" stroke="#cdcdcd" stroke-width="1"/>
<line x1="687.3" y1="269" x2="687.3" y2="660.5" stroke="#cdcdcd" stroke-width="1"/>
<line x1="764.6" y1="269" x2="764.6" y2="660.5" stroke="#cdcdcd" stroke-width="1"/>
<line x1="841.7" y1="269" x2="841.7" y2="660.5" stroke="#cdcdcd" stroke-width="1"/>
<line x1="918.9" y1="269" x2="918.9" y2="660.5" stroke="#cdcdcd" stroke-width="1"/>
<line x1="30.5" y1="293.4" x2="939" y2="293.4" stroke="#cdcdcd" stroke-width="1"/>
<line x1="30.5" y1="319.3" x2="939" y2="319.3" stroke="#cdcdcd" stroke-width="1"/>
<line x1="30.5" y1="345.1" x2="939" y2="345.1" stroke="#cdcdcd" stroke-width="1"/>
<line x1="30.5" y1="370.9" x2="939" y2="370.9" stroke="#cdcdcd" stroke-width="1"/>
<line x1="30.5" y1="395.5" x2="939" y2="395.5" stroke="#cdcdcd" stroke-width="1"/>
<line x1="30.5" y1="419.7" x2="939" y2="419.7" stroke="#cdcdcd" stroke-width="1"/>
<line x1="30.5" y1="443.8" x2="939" y2="443.8" stroke="#cdcdcd" stroke-width="1"/>
<line x1="30.5" y1="467.8" x2="939" y2="467.8" stroke="#cdcdcd" stroke-width="1"/>
<line x1="30.5" y1="491.8" x2="939" y2="491.8" stroke="#cdcdcd" stroke-width="1"/>
<line x1="30.5" y1="516" x2="939" y2="516" stroke="#cdcdcd" stroke-width="1"/>
<line x1="30.5" y1="540.1" x2="939" y2="540.1" stroke="#cdcdcd" stroke-width="1"/>
<line x1="30.5" y1="564.3" x2="939" y2="564.3" stroke="#cdcdcd" stroke-width="1"/>
<line x1="30.5" y1="588.4" x2="939" y2="588.4" stroke="#cdcdcd" stroke-width="1"/>
<line x1="30.5" y1="612.3" x2="939" y2="612.3" stroke="#cdcdcd" stroke-width="1"/>
<line x1="30.5" y1="636.3" x2="939" y2="636.3" stroke="#cdcdcd" stroke-width="1"/>
<line x1="30.5" y1="660.4" x2="939" y2="660.4" stroke="#cdcdcd" stroke-width="1"/>
<line x1="126.3" y1="246" x2="126.3" y2="269" stroke="#b5b5b5" stroke-width="1"/>
<line x1="223.5" y1="246" x2="223.5" y2="269" stroke="#b5b5b5" stroke-width="1"/>
<line x1="301.4" y1="246" x2="301.4" y2="269" stroke="#b5b5b5" stroke-width="1"/>
<line x1="378.6" y1="246" x2="378.6" y2="269" stroke="#b5b5b5" stroke-width="1"/>
<line x1="455.6" y1="246" x2="455.6" y2="269" stroke="#b5b5b5" stroke-width="1"/>
<line x1="532.8" y1="246" x2="532.8" y2="269" stroke="#b5b5b5" stroke-width="1"/>
<line x1="610" y1="246" x2="610" y2="269" stroke="#b5b5b5" stroke-width="1"/>
<line x1="687.3" y1="246" x2="687.3" y2="269" stroke="#b5b5b5" stroke-width="1"/>
<line x1="764.6" y1="246" x2="764.6" y2="269" stroke="#b5b5b5" stroke-width="1"/>
<line x1="841.7" y1="246" x2="841.7" y2="269" stroke="#b5b5b5" stroke-width="1"/>
<line x1="918.9" y1="246" x2="918.9" y2="269" stroke="#b5b5b5" stroke-width="1"/>
<line x1="0" y1="293.4" x2="30.5" y2="293.4" stroke="#bdbdbd" stroke-width="1"/>
<line x1="0" y1="319.3" x2="30.5" y2="319.3" stroke="#bdbdbd" stroke-width="1"/>
<line x1="0" y1="345.1" x2="30.5" y2="345.1" stroke="#bdbdbd" stroke-width="1"/>
<line x1="0" y1="370.9" x2="30.5" y2="370.9" stroke="#bdbdbd" stroke-width="1"/>
<line x1="0" y1="395.5" x2="30.5" y2="395.5" stroke="#bdbdbd" stroke-width="1"/>
<line x1="0" y1="419.7" x2="30.5" y2="419.7" stroke="#bdbdbd" stroke-width="1"/>
<line x1="0" y1="443.8" x2="30.5" y2="443.8" stroke="#bdbdbd" stroke-width="1"/>
<line x1="0" y1="467.8" x2="30.5" y2="467.8" stroke="#bdbdbd" stroke-width="1"/>
<line x1="0" y1="491.8" x2="30.5" y2="491.8" stroke="#bdbdbd" stroke-width="1"/>
<line x1="0" y1="516" x2="30.5" y2="516" stroke="#bdbdbd" stroke-width="1"/>
<line x1="0" y1="540.1" x2="30.5" y2="540.1" stroke="#bdbdbd" stroke-width="1"/>
<line x1="0" y1="564.3" x2="30.5" y2="564.3" stroke="#bdbdbd" stroke-width="1"/>
<line x1="0" y1="588.4" x2="30.5" y2="588.4" stroke="#bdbdbd" stroke-width="1"/>
<line x1="0" y1="612.3" x2="30.5" y2="612.3" stroke="#bdbdbd" stroke-width="1"/>
<line x1="0" y1="636.3" x2="30.5" y2="636.3" stroke="#bdbdbd" stroke-width="1"/>
<line x1="0" y1="660.4" x2="30.5" y2="660.4" stroke="#bdbdbd" stroke-width="1"/>
<line x1="0" y1="269.5" x2="939.5" y2="269.5" stroke="#9e9e9e" stroke-width="1.1"/>
<line x1="30.5" y1="247" x2="30.5" y2="661" stroke="#a6a6a6" stroke-width="1.4"/>
<line x1="939" y1="269" x2="939" y2="661" stroke="#c6c6c6" stroke-width="1"/>
<path d="M12,265.5 L27,265.5 L27,251.5 Z" fill="#bdbdbd" stroke="none" stroke-width="1"/>
<text x="78.4" y="263.3" font-size="15.26" fill="#333" font-weight="normal" font-family="Liberation Sans" text-anchor="middle" stroke="#333" stroke-width="0.12">A</text>
<text x="174.9" y="263.3" font-size="15.26" fill="#333" font-weight="normal" font-family="Liberation Sans" text-anchor="middle" stroke="#333" stroke-width="0.12">B</text>
<text x="262.4" y="263.3" font-size="15.26" fill="#333" font-weight="normal" font-family="Liberation Sans" text-anchor="middle" stroke="#333" stroke-width="0.12">C</text>
<text x="340.0" y="263.3" font-size="15.26" fill="#333" font-weight="normal" font-family="Liberation Sans" text-anchor="middle" stroke="#333" stroke-width="0.12">D</text>
<text x="417.1" y="263.3" font-size="15.26" fill="#333" font-weight="normal" font-family="Liberation Sans" text-anchor="middle" stroke="#333" stroke-width="0.12">E</text>
<text x="494.2" y="263.3" font-size="15.26" fill="#333" font-weight="normal" font-family="Liberation Sans" text-anchor="middle" stroke="#333" stroke-width="0.12">F</text>
<text x="571.4" y="263.3" font-size="15.26" fill="#333" font-weight="normal" font-family="Liberation Sans" text-anchor="middle" stroke="#333" stroke-width="0.12">G</text>
<text x="648.6" y="263.3" font-size="15.26" fill="#333" font-weight="normal" font-family="Liberation Sans" text-anchor="middle" stroke="#333" stroke-width="0.12">H</text>
<text x="726.0" y="263.3" font-size="15.26" fill="#333" font-weight="normal" font-family="Liberation Sans" text-anchor="middle" stroke="#333" stroke-width="0.12">I</text>
<text x="803.2" y="263.3" font-size="15.26" fill="#333" font-weight="normal" font-family="Liberation Sans" text-anchor="middle" stroke="#333" stroke-width="0.12">J</text>
<text x="880.3" y="263.3" font-size="15.26" fill="#333" font-weight="normal" font-family="Liberation Sans" text-anchor="middle" stroke="#333" stroke-width="0.12">K</text>
<text x="15.5" y="286.5" font-size="15.41" fill="#333" font-weight="normal" font-family="Liberation Sans" text-anchor="middle" stroke="#333" stroke-width="0.12">1</text>
<text x="15.5" y="311.7" font-size="15.41" fill="#333" font-weight="normal" font-family="Liberation Sans" text-anchor="middle" stroke="#333" stroke-width="0.12">2</text>
<text x="15.5" y="337.5" font-size="15.41" fill="#333" font-weight="normal" font-family="Liberation Sans" text-anchor="middle" stroke="#333" stroke-width="0.12">3</text>
<text x="15.5" y="363.3" font-size="15.41" fill="#333" font-weight="normal" font-family="Liberation Sans" text-anchor="middle" stroke="#333" stroke-width="0.12">4</text>
<text x="15.5" y="388.5" font-size="15.41" fill="#333" font-weight="normal" font-family="Liberation Sans" text-anchor="middle" stroke="#333" stroke-width="0.12">5</text>
<text x="15.5" y="412.9" font-size="15.41" fill="#333" font-weight="normal" font-family="Liberation Sans" text-anchor="middle" stroke="#333" stroke-width="0.12">6</text>
<text x="15.5" y="437.1" font-size="15.41" fill="#333" font-weight="normal" font-family="Liberation Sans" text-anchor="middle" stroke="#333" stroke-width="0.12">7</text>
<text x="15.5" y="461.1" font-size="15.41" fill="#333" font-weight="normal" font-family="Liberation Sans" text-anchor="middle" stroke="#333" stroke-width="0.12">8</text>
<text x="15.5" y="485.1" font-size="15.41" fill="#333" font-weight="normal" font-family="Liberation Sans" text-anchor="middle" stroke="#333" stroke-width="0.12">9</text>
<text x="15.5" y="509.2" font-size="15.41" fill="#333" font-weight="normal" font-family="Liberation Sans" text-anchor="middle" stroke="#333" stroke-width="0.12">10</text>
<text x="15.5" y="533.3" font-size="15.41" fill="#333" font-weight="normal" font-family="Liberation Sans" text-anchor="middle" stroke="#333" stroke-width="0.12">11</text>
<text x="15.5" y="557.5" font-size="15.41" fill="#333" font-weight="normal" font-family="Liberation Sans" text-anchor="middle" stroke="#333" stroke-width="0.12">12</text>
<text x="15.5" y="581.6" font-size="15.41" fill="#333" font-weight="normal" font-family="Liberation Sans" text-anchor="middle" stroke="#333" stroke-width="0.12">13</text>
<text x="15.5" y="605.6" font-size="15.41" fill="#333" font-weight="normal" font-family="Liberation Sans" text-anchor="middle" stroke="#333" stroke-width="0.12">14</text>
<text x="15.5" y="629.6" font-size="15.41" fill="#333" font-weight="normal" font-family="Liberation Sans" text-anchor="middle" stroke="#333" stroke-width="0.12">15</text>
<text x="15.5" y="653.6" font-size="15.41" fill="#333" font-weight="normal" font-family="Liberation Sans" text-anchor="middle" stroke="#333" stroke-width="0.12">16</text>
<text x="34.3" y="288.3" font-size="15.12" fill="#1a1a1a" font-weight="normal" font-family="Liberation Sans" text-anchor="start" textLength="75.9" lengthAdjust="spacingAndGlyphs" stroke="#1a1a1a" stroke-width="0.12">Last Name</text>
<text x="129.9" y="288.3" font-size="15.12" fill="#1a1a1a" font-weight="normal" font-family="Liberation Sans" text-anchor="start" textLength="79.5" lengthAdjust="spacingAndGlyphs" stroke="#1a1a1a" stroke-width="0.12">First Name</text>
<text x="227.5" y="287.6" font-size="15.26" fill="#1a1a1a" font-weight="normal" font-family="Liberation Sans" text-anchor="start" textLength="59.2" lengthAdjust="spacingAndGlyphs" stroke="#1a1a1a" stroke-width="0.12">Address</text>
<text x="34.3" y="312.6" font-size="15.26" fill="#1a1a1a" font-weight="normal" font-family="Liberation Sans" text-anchor="start" textLength="41.6" lengthAdjust="spacingAndGlyphs" stroke="#1a1a1a" stroke-width="0.12">Smith</text>
<text x="129.5" y="312.6" font-size="15.26" fill="#1a1a1a" font-weight="normal" font-family="Liberation Sans" text-anchor="start" textLength="33.6" lengthAdjust="spacingAndGlyphs" stroke="#1a1a1a" stroke-width="0.12">John</text>
<text x="34.3" y="339.0" font-size="15.12" fill="#1a1a1a" font-weight="normal" font-family="Liberation Sans" text-anchor="start" textLength="29.1" lengthAdjust="spacingAndGlyphs" stroke="#1a1a1a" stroke-width="0.12">Doe</text>
<text x="129.5" y="339.0" font-size="15.12" fill="#1a1a1a" font-weight="normal" font-family="Liberation Sans" text-anchor="start" textLength="32.5" lengthAdjust="spacingAndGlyphs" stroke="#1a1a1a" stroke-width="0.12">Jane</text>
<rect x="223.5" y="293.9" width="77.9" height="23" fill="#c6efce"/>
<text x="227.5" y="312.2" font-size="15.26" fill="#006100" font-weight="normal" font-family="Liberation Sans" text-anchor="start" textLength="120.7" lengthAdjust="spacingAndGlyphs" stroke="#006100" stroke-width="0.12">123 North Street</text>
<rect x="222" y="317" width="79.4" height="31" fill="#4f4f4f"/>
<rect x="223.5" y="318.5" width="77.9" height="28" fill="#8c8c8c"/>
<rect x="225" y="320" width="76.4" height="25" fill="#404040"/>
<rect x="226" y="321" width="75.4" height="23" fill="#a5a5a5"/>
<clipPath id="c3"><rect x="226" y="321" width="75.4" height="23"/></clipPath>
<text x="227.5" y="338.7" font-size="15.26" fill="#ffffff" font-weight="bold" font-family="Liberation Sans" text-anchor="start" textLength="103.2" lengthAdjust="spacingAndGlyphs" clip-path="url(#c3)">987 West Way</text>
<rect x="944.5" y="249" width="17" height="18" fill="#ffffff" stroke="#c0c0c0" stroke-width="1"/>
<path d="M948.5,259.4 L952.8,254.6 L957,259.4 Z" fill="#666" stroke="none" stroke-width="1"/>
<rect x="944.5" y="267.5" width="17" height="301.3" fill="#ffffff" stroke="#b4b4b4" stroke-width="1"/>
<rect x="944" y="569.3" width="18" height="77" fill="#dadada"/>
<rect x="944.5" y="646.5" width="17" height="17" fill="#ffffff" stroke="#c0c0c0" stroke-width="1"/>
<path d="M948.5,653 L952.8,657.5 L957,653 Z" fill="#666" stroke="none" stroke-width="1"/>
<line x1="939.4" y1="269" x2="939.4" y2="663.5" stroke="#a8a8a8" stroke-width="1"/>
<rect x="0" y="663" width="963" height="34" fill="#e6e6e6"/>
<line x1="0" y1="663.5" x2="939.9" y2="663.5" stroke="#a8a8a8" stroke-width="1"/>
<rect x="0" y="697" width="963" height="23" fill="#f1f1f1"/>
<line x1="0" y1="696.5" x2="963" y2="696.5" stroke="#c8c8c8" stroke-width="1.2"/>
<path d="M37,674.5 L33,679 L37,683.5 Z" fill="#c0c0c0" stroke="none" stroke-width="1"/>
<path d="M67,674.5 L71,679 L67,683.5 Z" fill="#c0c0c0" stroke="none" stroke-width="1"/>
<rect x="121.5" y="663" width="77" height="29.5" fill="#ffffff"/>
<line x1="121.5" y1="663" x2="121.5" y2="692.5" stroke="#b8b8b8" stroke-width="1"/>
<line x1="198.5" y1="663" x2="198.5" y2="692.5" stroke="#b8b8b8" stroke-width="1"/>
<rect x="121.5" y="690" width="77" height="2.5" fill="#217346"/>
<text x="134.9" y="683.4" font-size="15.55" fill="#217346" font-weight="bold" font-family="Liberation Sans" text-anchor="start" textLength="49.5" lengthAdjust="spacingAndGlyphs">Sheet1</text>
<circle cx="248.3" cy="679.4" r="8.8" fill="none" stroke="#777" stroke-width="1.1"/>
<path d="M248.3,674.6 V684.2 M243.5,679.4 H253.1" fill="none" stroke="#666" stroke-width="2.3"/>
<rect x="579.5" y="672.7" width="1.5" height="1.6" fill="#9a9a9a"/>
<rect x="579.5" y="678.2" width="1.5" height="1.6" fill="#9a9a9a"/>
<rect x="579.5" y="683.7" width="1.5" height="1.6" fill="#9a9a9a"/>
<rect x="600.5" y="670.5" width="18" height="17.5" fill="#ffffff" stroke="#b0b0b0" stroke-width="1"/>
<rect x="618.5" y="670.5" width="275" height="17.5" fill="#ffffff" stroke="#b0b0b0" stroke-width="1"/>
<rect x="893.5" y="671" width="28.2" height="17" fill="#dadada"/>
<rect x="924.5" y="671.3" width="17" height="17" fill="#ffffff" stroke="#b0b0b0" stroke-width="1"/>
<path d="M611.5,675 L607,679.3 L611.5,683.5 Z" fill="#555" stroke="none" stroke-width="1"/>
<path d="M931,675 L935.5,679.5 L931,684 Z" fill="#666" stroke="none" stroke-width="1"/>
<text x="10.3" y="713.2" font-size="13.52" fill="#585858" font-weight="normal" font-family="Liberation Sans" text-anchor="start" textLength="36.4" lengthAdjust="spacingAndGlyphs" stroke="#585858" stroke-width="0.12">Ready</text>
<rect x="613" y="697" width="46" height="23" fill="#c6c6c6"/>
<path d="M628.5,701.8 H642.3 V715.8 H628.5 Z M628.5,706.5 H642.3 M628.5,711.1 H642.3 M633.1,701.8 V715.8 M637.7,701.8 V715.8" fill="none" stroke="#555" stroke-width="1.5"/>
<path d="M673.4,701.5 H689.6 V716 H673.4 Z" fill="none" stroke="#555" stroke-width="1.1"/>
<path d="M676,704 H687 V713.5 H676 Z" fill="none" stroke="#777" stroke-width="1"/>
<path d="M678.5,706.5 H684.5 M678.5,708.8 H684.5 M678.5,711 H684.5" fill="none" stroke="#555" stroke-width="1"/>
<path d="M719.5,701.5 H735.4 V716 H719.5 Z M724,701.5 V709 M729,701.5 V709 H719.5" fill="none" stroke="#555" stroke-width="1.1"/>
<line x1="756.5" y1="709.2" x2="764" y2="709.2" stroke="#555" stroke-width="2.4"/>
<line x1="769" y1="708.8" x2="888.5" y2="708.8" stroke="#b0b0b0" stroke-width="1.2"/>
<rect x="827" y="702" width="3.5" height="13" fill="#555"/>
<path d="M894.3,709.2 H903.3 M898.8,704.7 V713.7" fill="none" stroke="#555" stroke-width="2.3"/>
<text x="922.4" y="713.2" font-size="13.52" fill="#555" font-weight="normal" font-family="Liberation Sans" text-anchor="start" textLength="33.1" lengthAdjust="spacingAndGlyphs" stroke="#555" stroke-width="0.12">100%</text>
<filter id="sh" x="-20%" y="-20%" width="140%" height="140%"><feGaussianBlur in="SourceAlpha" stdDeviation="1.2"/><feOffset dx="-0.5" dy="1.5" result="b"/><feComponentTransfer><feFuncA type="linear" slope="0.55"/></feComponentTransfer><feMerge><feMergeNode/><feMergeNode in="SourceGraphic"/></feMerge></filter>
<g filter="url(#sh)">
<path d="M315,296.5 L341,270 L341.5,280 L426.3,262.5 Q430,264 428,269 L345,298 L351.5,306.5 Z" fill="#00e50a" stroke="none" stroke-width="1"/>
<path d="M306.7,341.7 L342.5,353.3 L334.2,356.7 L388,430 Q387,432 385,430.8 L319.2,370 L314.2,379.2 Z" fill="#fa8419" stroke="none" stroke-width="1"/>
</g>
<g filter="url(#sh)">
<path d="M438.75,251.8 H445.3 V280.3 H438.75 V262 L432.5,264 V258.5 Z" fill="#00e50a" stroke="#000" stroke-width="6.5" stroke-linejoin="round" paint-order="stroke"/>
<path d="M398.3,421 C398.3,416.8 401.3,415 405.5,415 C409.7,415 412.7,417.3 412.7,421 C412.7,424.5 410.5,426.5 407,429.5 L398.3,438 H412.7" fill="none" stroke="#000" stroke-width="12" stroke-linejoin="round" stroke-linecap="round"/>
<path d="M398.3,421 C398.3,416.8 401.3,415 405.5,415 C409.7,415 412.7,417.3 412.7,421 C412.7,424.5 410.5,426.5 407,429.5 L398.3,438 H412.7" fill="none" stroke="#fa8419" stroke-width="5" stroke-linejoin="miter" stroke-linecap="square"/>
</g>
</svg>
</body></html>
